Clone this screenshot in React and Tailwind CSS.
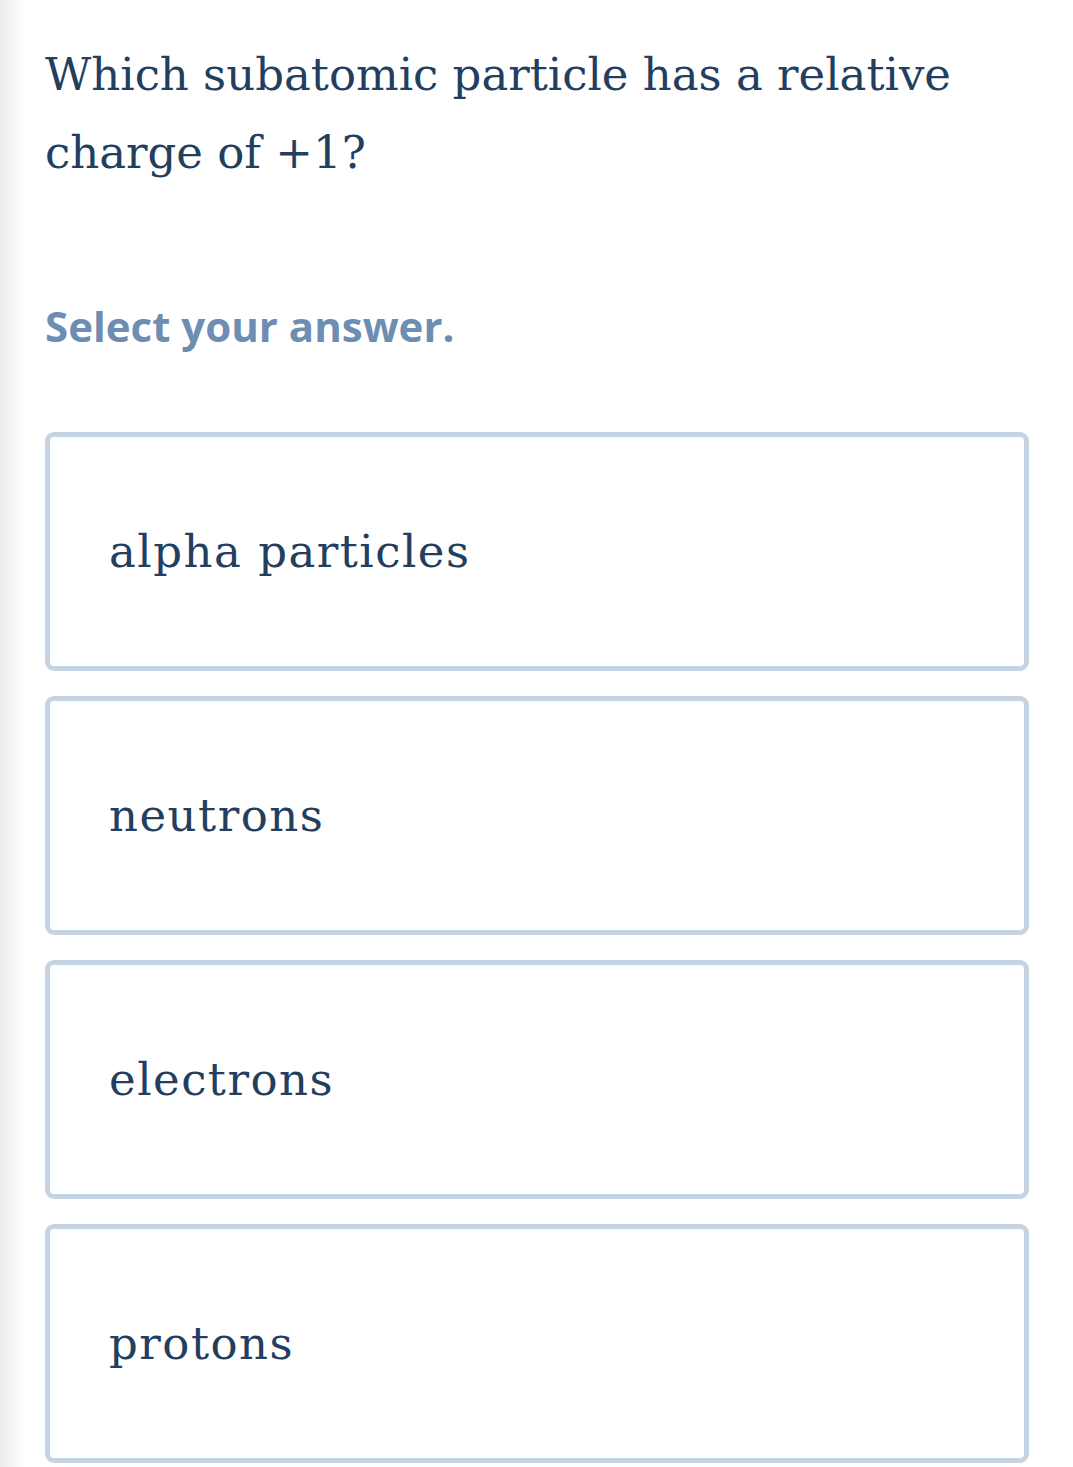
import React from 'react';

const answers = ['alpha particles', 'neutrons', 'electrons', 'protons'];

export default function App() {
  return (
    <div className="flex min-h-[1467px] w-full bg-white">
      {/* left shadow strip */}
      <div className="w-[26px] shrink-0 bg-gradient-to-r from-[#ebebeb] to-white" />
      <div className="flex-1 pl-[19px] pr-[44px] pt-[36px]">
        <h1
          className="text-[45px] leading-[78px] text-[#233e5f] font-normal"
          style={{ fontFamily: '"DejaVu Serif", serif' }}
        >
          Which subatomic particle has a relative charge of +1?
        </h1>
        <p
          className="mt-[102px] text-[42px] leading-[63px] font-bold text-[#6d8db3]"
          style={{ fontFamily: '"Open Sans", sans-serif' }}
        >
          Select your answer.
        </p>
        <div className="mt-[75px] flex flex-col gap-[25px]">
          {answers.map((a) => (
            <div
              key={a}
              className="flex h-[239px] items-center rounded-[9px] border-[5px] border-[#c4d4e3] pl-[59px]"
            >
              <span
                className="text-[45px] tracking-[1.5px] text-[#233e5f]"
                style={{ fontFamily: '"DejaVu Serif", serif' }}
              >
                {a}
              </span>
            </div>
          ))}
        </div>
      </div>
    </div>
  );
}
